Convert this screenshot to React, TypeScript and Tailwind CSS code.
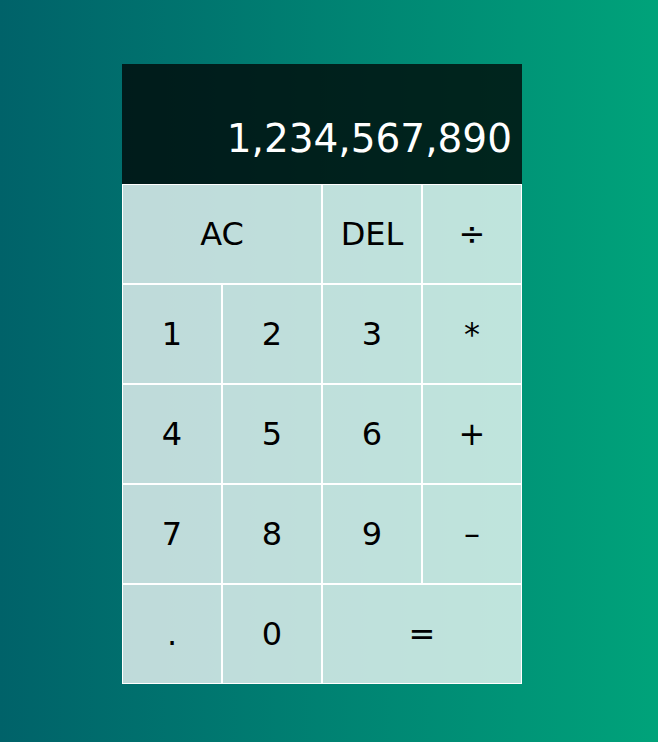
import React, { useState } from 'react';

const font = { fontFamily: '"DejaVu Sans", Verdana, sans-serif' };

const Key = ({
  label,
  text,
  wide,
  onPress,
}: {
  label: string;
  text?: string;
  wide?: boolean;
  onPress: (v: string) => void;
}) => (
  <button
    onClick={() => onPress(label)}
    className={`flex items-center justify-center border border-white bg-white/75 text-[32px] leading-none text-black hover:bg-white/90 ${
      wide ? 'col-span-2' : ''
    }`}
  >
    {text ?? label}
  </button>
);

const formatNumber = (value: string) => {
  const [int, dec] = value.split('.');
  const n = parseFloat(int);
  const intText = isNaN(n) ? '' : n.toLocaleString('en', { maximumFractionDigits: 0 });
  return dec != null ? `${intText}.${dec}` : intText;
};

const App = () => {
  const [current, setCurrent] = useState('1234567890');

  const press = (key: string) => {
    if (key === 'AC') return setCurrent('');
    if (key === 'DEL') return setCurrent(prev => prev.slice(0, -1));
    if (/[0-9.]/.test(key)) {
      if (key === '.' && current.includes('.')) return;
      setCurrent(prev => prev + key);
    }
  };

  return (
    <div
      className="flex min-h-screen justify-center bg-gradient-to-r from-[#006269] to-[#00a37a] pt-16 pr-[14px]"
      style={font}
    >
      <div className="grid h-[620px] grid-cols-[repeat(4,100px)] grid-rows-[120px_repeat(5,100px)]">
        {/* Display */}
        <div className="col-span-4 flex items-end justify-end bg-black/75 pr-[10px] pb-[26px]">
          <div className="text-[39px] leading-none text-white">{formatNumber(current)}</div>
        </div>

        <Key label="AC" wide onPress={press} />
        <Key label="DEL" onPress={press} />
        <Key label="÷" onPress={press} />
        <Key label="1" onPress={press} />
        <Key label="2" onPress={press} />
        <Key label="3" onPress={press} />
        <Key label="*" onPress={press} />
        <Key label="4" onPress={press} />
        <Key label="5" onPress={press} />
        <Key label="6" onPress={press} />
        <Key label="+" onPress={press} />
        <Key label="7" onPress={press} />
        <Key label="8" onPress={press} />
        <Key label="9" onPress={press} />
        <Key label="-" text="–" onPress={press} />
        <Key label="." onPress={press} />
        <Key label="0" onPress={press} />
        <Key label="=" wide onPress={press} />
      </div>
    </div>
  );
};

export default App;
